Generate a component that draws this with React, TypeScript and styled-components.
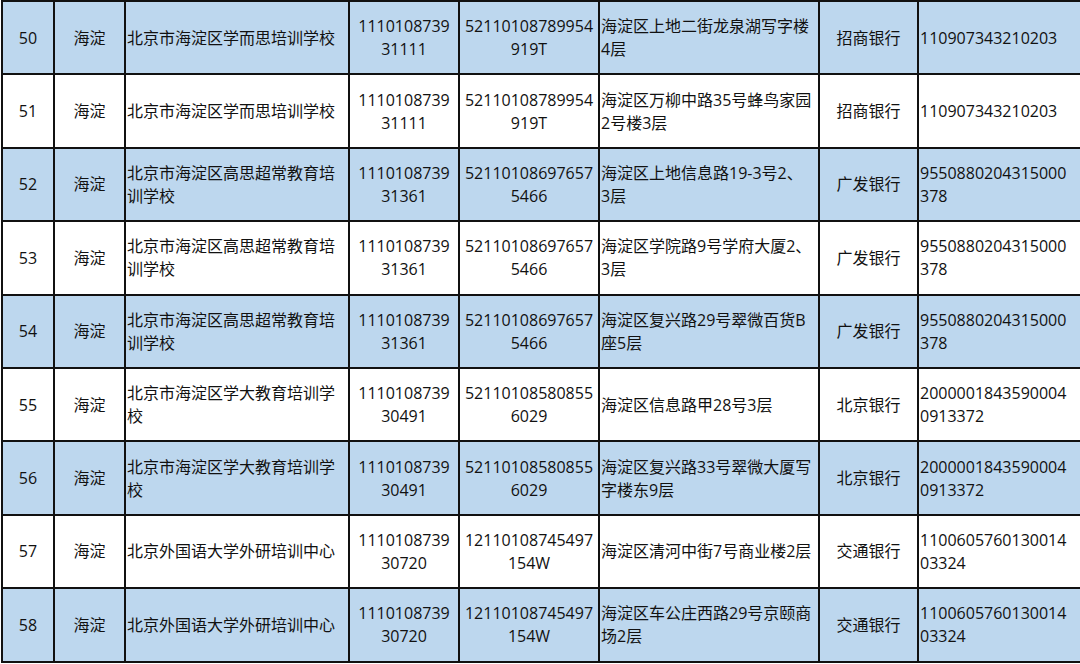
import React from 'react';
import styled, { createGlobalStyle } from 'styled-components';

const GlobalStyle = createGlobalStyle`
  html, body {
    margin: 0;
    padding: 0;
    background: #fff;
    overflow: hidden;
  }
`;

type Row = {
  no: string;
  district: string;
  name: string[];
  credit: string[];
  org: string[];
  address: string[];
  bank: string;
  account: string[];
};

const rows: Row[] = [
  {
    no: '50',
    district: '海淀',
    name: ['北京市海淀区学而思培训学校'],
    credit: ['1110108739', '31111'],
    org: ['52110108789954', '919T'],
    address: ['海淀区上地二街龙泉湖写字楼', '4层'],
    bank: '招商银行',
    account: ['110907343210203'],
  },
  {
    no: '51',
    district: '海淀',
    name: ['北京市海淀区学而思培训学校'],
    credit: ['1110108739', '31111'],
    org: ['52110108789954', '919T'],
    address: ['海淀区万柳中路35号蜂鸟家园', '2号楼3层'],
    bank: '招商银行',
    account: ['110907343210203'],
  },
  {
    no: '52',
    district: '海淀',
    name: ['北京市海淀区高思超常教育培', '训学校'],
    credit: ['1110108739', '31361'],
    org: ['52110108697657', '5466'],
    address: ['海淀区上地信息路19-3号2、', '3层'],
    bank: '广发银行',
    account: ['9550880204315000', '378'],
  },
  {
    no: '53',
    district: '海淀',
    name: ['北京市海淀区高思超常教育培', '训学校'],
    credit: ['1110108739', '31361'],
    org: ['52110108697657', '5466'],
    address: ['海淀区学院路9号学府大厦2、', '3层'],
    bank: '广发银行',
    account: ['9550880204315000', '378'],
  },
  {
    no: '54',
    district: '海淀',
    name: ['北京市海淀区高思超常教育培', '训学校'],
    credit: ['1110108739', '31361'],
    org: ['52110108697657', '5466'],
    address: ['海淀区复兴路29号翠微百货B', '座5层'],
    bank: '广发银行',
    account: ['9550880204315000', '378'],
  },
  {
    no: '55',
    district: '海淀',
    name: ['北京市海淀区学大教育培训学', '校'],
    credit: ['1110108739', '30491'],
    org: ['52110108580855', '6029'],
    address: ['海淀区信息路甲28号3层'],
    bank: '北京银行',
    account: ['2000001843590004', '0913372'],
  },
  {
    no: '56',
    district: '海淀',
    name: ['北京市海淀区学大教育培训学', '校'],
    credit: ['1110108739', '30491'],
    org: ['52110108580855', '6029'],
    address: ['海淀区复兴路33号翠微大厦写', '字楼东9层'],
    bank: '北京银行',
    account: ['2000001843590004', '0913372'],
  },
  {
    no: '57',
    district: '海淀',
    name: ['北京外国语大学外研培训中心'],
    credit: ['1110108739', '30720'],
    org: ['12110108745497', '154W'],
    address: ['海淀区清河中街7号商业楼2层'],
    bank: '交通银行',
    account: ['1100605760130014', '03324'],
  },
  {
    no: '58',
    district: '海淀',
    name: ['北京外国语大学外研培训中心'],
    credit: ['1110108739', '30720'],
    org: ['12110108745497', '154W'],
    address: ['海淀区车公庄西路29号京颐商', '场2层'],
    bank: '交通银行',
    account: ['1100605760130014', '03324'],
  },
];

const colWidths = [52, 71, 224, 110, 140, 220, 99, 180];

const Sheet = styled.table`
  border-collapse: collapse;
  table-layout: fixed;
  width: ${colWidths.reduce((a, b) => a + b, 0)}px;
  margin: 0 0 0 1px;
  font-family: "Open Sans", "Noto Sans CJK SC", sans-serif;
  font-size: 16px;
  line-height: 23px;
  color: #111;
`;

const Line = styled.tr<{ $shaded: boolean }>`
  height: 73.4px;
  background: ${(p) => (p.$shaded ? '#bdd7ee' : '#ffffff')};
`;

const Cell = styled.td<{ $align?: 'left' | 'center' }>`
  border: 2px solid #111;
  padding: 1px 1px 0;
  text-align: ${(p) => p.$align ?? 'center'};
  vertical-align: middle;
  white-space: nowrap;
  overflow: hidden;
`;

const Lines = ({ items }: { items: string[] }) => (
  <>
    {items.map((t, i) => (
      <div key={i}>{t}</div>
    ))}
  </>
);

export default function App() {
  return (
    <>
      <GlobalStyle />
      <Sheet>
        <colgroup>
          {colWidths.map((w, i) => (
            <col key={i} style={{ width: w }} />
          ))}
        </colgroup>
        <tbody>
          {rows.map((r, i) => (
            <Line key={r.no} $shaded={i % 2 === 0}>
              <Cell>{r.no}</Cell>
              <Cell>{r.district}</Cell>
              <Cell $align="left">
                <Lines items={r.name} />
              </Cell>
              <Cell>
                <Lines items={r.credit} />
              </Cell>
              <Cell>
                <Lines items={r.org} />
              </Cell>
              <Cell $align="left">
                <Lines items={r.address} />
              </Cell>
              <Cell>{r.bank}</Cell>
              <Cell $align="left">
                <Lines items={r.account} />
              </Cell>
            </Line>
          ))}
        </tbody>
      </Sheet>
    </>
  );
}
